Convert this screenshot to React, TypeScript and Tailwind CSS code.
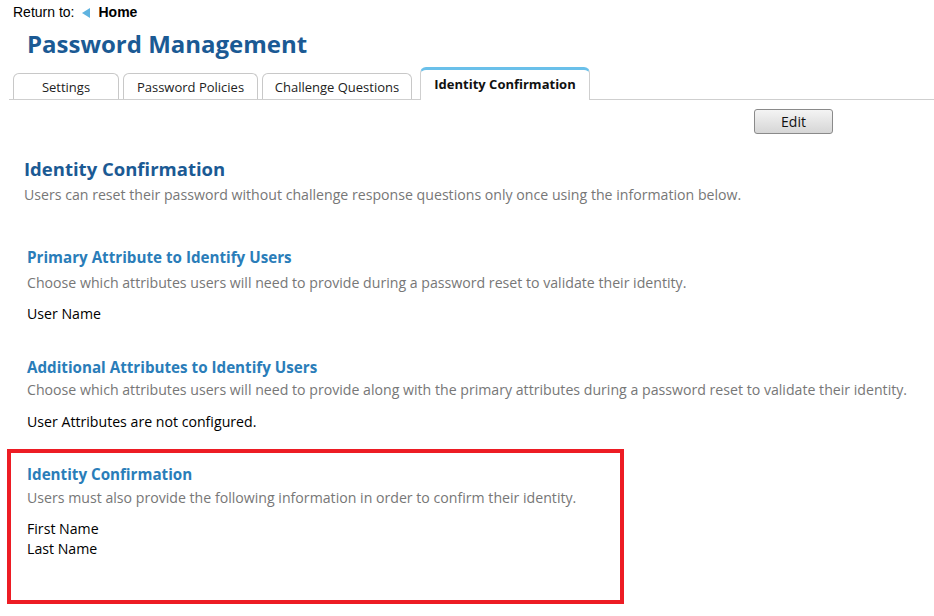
export default function App() {
  const tabs = [
    { label: 'Settings', w: 'w-[106px]' },
    { label: 'Password Policies', w: 'w-[135px]' },
    { label: 'Challenge Questions', w: 'w-[150px]' },
  ];

  return (
    <div className="min-h-[616px] bg-white font-['Open_Sans',sans-serif] text-black">
      {/* return link */}
      <div className="flex items-center pl-[13px] pt-[3px] h-[22px] font-['Liberation_Sans',Arial,sans-serif] text-[14px]">
        <span>Return to:</span>
        <svg className="ml-[8px] mr-[7px]" width="9" height="10" viewBox="0 0 9 10">
          <polygon points="8,0 8,10 0,5" fill="#5fb3e0" />
        </svg>
        <span className="font-bold">Home</span>
      </div>

      <h1 className="pl-[27px] mt-[5px] text-[24px] leading-[34px] font-bold text-[#1b5a94]">
        Password Management
      </h1>

      {/* tabs */}
      <div className="ml-[9px] mt-[6px] flex items-end gap-[4px] border-b border-[#cfcfcf] pl-[4px] h-[33px]">
        {tabs.map((t) => (
          <div
            key={t.label}
            className={`${t.w} h-[26px] rounded-t-[6px] border border-b-0 border-[#c8c8c8] bg-white flex items-center justify-center pt-[2px] text-[13px] text-[#222]`}
          >
            {t.label}
          </div>
        ))}
        <div className="ml-[4px] w-[170px] h-[33px] rounded-t-[6px] border border-b-0 border-[#cfcfcf] border-t-[3px] border-t-[#6ac0ea] bg-white flex items-center justify-center text-[13px] font-bold text-[#111] -mb-px pb-[1px]">
          Identity Confirmation
        </div>
      </div>

      <div className="flex justify-end pr-[101px] mt-[9px]">
        <button className="w-[79px] h-[25px] rounded-[3px] border border-[#8a8a8a] bg-gradient-to-b from-[#f4f4f4] to-[#d6d6d6] text-[14px] text-[#111]">
          Edit
        </button>
      </div>

      <div className="pl-[24px] mt-[22px]">
        <h2 className="text-[18.5px] leading-[26px] font-bold text-[#1b5a94]">Identity Confirmation</h2>
        <p className="mt-[3px] text-[14.15px] leading-[20px] text-[#777]">
          Users can reset their password without challenge response questions only once using the information below.
        </p>
      </div>

      <div className="pl-[27px] mt-[42px]">
        <h3 className="text-[15.2px] leading-[20px] font-bold text-[#2a7db9]">Primary Attribute to Identify Users</h3>
        <p className="mt-[6px] text-[14.15px] leading-[20px] text-[#777]">
          Choose which attributes users will need to provide during a password reset to validate their identity.
        </p>
        <p className="mt-[11px] text-[14.15px] leading-[20px]">User Name</p>
      </div>

      <div className="pl-[27px] mt-[33px]">
        <h3 className="text-[15.2px] leading-[20px] font-bold text-[#2a7db9]">Additional Attributes to Identify Users</h3>
        <p className="mt-[3px] text-[14.15px] leading-[20px] text-[#777]">
          Choose which attributes users will need to provide along with the primary attributes during a password reset to validate their identity.
        </p>
        <p className="mt-[12px] text-[14.15px] leading-[20px]">User Attributes are not configured.</p>
      </div>

      <div className="ml-[7px] mt-[17px] w-[617px] h-[155px] border-[4px] border-[#ed1c24] pl-[16px] pt-[11px]">
        <h3 className="text-[15.2px] leading-[20px] font-bold text-[#2a7db9]">Identity Confirmation</h3>
        <p className="mt-[4px] text-[14.15px] leading-[20px] text-[#777]">
          Users must also provide the following information in order to confirm their identity.
        </p>
        <p className="mt-[11px] text-[14.15px] leading-[20px]">First Name</p>
        <p className="text-[14.15px] leading-[20px]">Last Name</p>
      </div>
    </div>
  );
}
